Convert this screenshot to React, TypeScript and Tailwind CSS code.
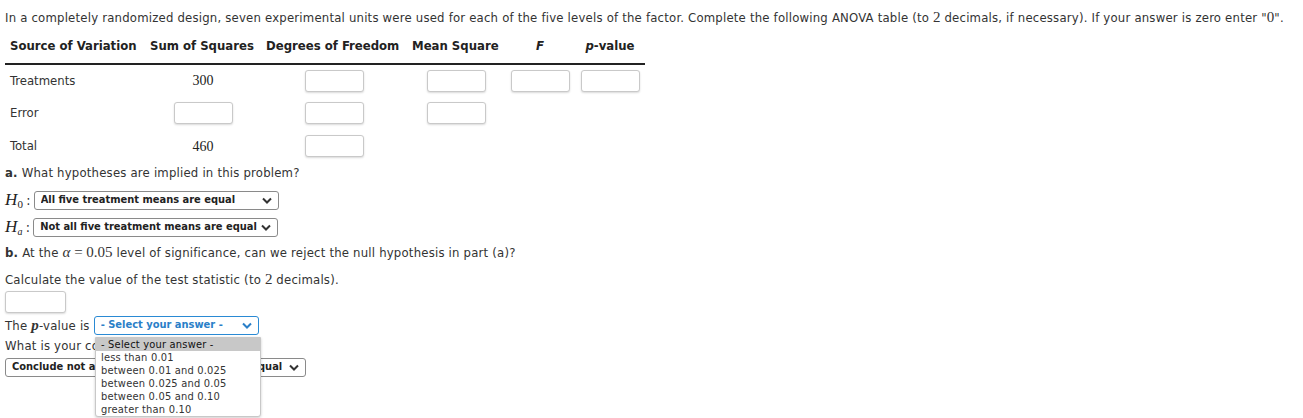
import React from "react";

const font = "font-['DejaVu_Sans_Condensed','DejaVu_Sans',sans-serif]";
const serif = "font-['Liberation_Serif','DejaVu_Serif',serif]";

function Box({ className = "" }: { className?: string }) {
  return (
    <span
      className={`inline-block w-[59px] h-[22px] rounded-[3px] border border-[#c9c9c9] bg-white shadow-[0_1px_2px_rgba(0,0,0,0.15)] align-middle ${className}`}
    />
  );
}

function Chevron({ color = "#333" }: { color?: string }) {
  return (
    <svg width="10" height="7" viewBox="0 0 10 7" className="shrink-0">
      <path d="M1 1.5 L5 5.5 L9 1.5" fill="none" stroke={color} strokeWidth="2" />
    </svg>
  );
}

function Select({ text, width, blue }: { text: string; width: string; blue?: boolean }) {
  return (
    <span
      className={`inline-flex items-center justify-between gap-[4px] h-[19px] rounded-[3px] border bg-white pl-[6px] pr-[6px] text-[11px] font-bold align-middle tracking-normal ${width} ${
        blue ? "border-[#2a8ad4] text-[#2a7fc8]" : "border-[#8a8a8a] text-[#222]"
      }`}
    >
      <span className="whitespace-nowrap overflow-hidden">{text}</span>
      <Chevron color={blue ? "#2a7fc8" : "#333"} />
    </span>
  );
}

function M({ children }: { children: React.ReactNode }) {
  return <span className={`${serif} text-[15px] tracking-normal`}>{children}</span>;
}

export default function App() {
  const th = "font-bold text-[13px] text-[#222] px-[5px] pb-[7px] pt-0 whitespace-nowrap";
  const td = "px-[5px] h-[33px] align-middle";
  return (
    <div className={`${font} text-[13px] tracking-[0.2px] text-[#333] bg-white w-[1303px] h-[418px] relative overflow-hidden`}>
      <div className="pl-[5px] pt-[8px] leading-[18px]">
        In a completely randomized design, seven experimental units were used for each of the five levels of the factor.
        Complete the following ANOVA table (to <M>2</M> decimals, if necessary). If your answer is zero enter "<M>0</M>".
      </div>

      <table className="ml-[5px] mt-[9px] border-collapse tracking-normal">
        <thead>
          <tr className="border-b-2 border-[#222]">
            <th className={`${th} text-left w-[140px]`}>Source of Variation</th>
            <th className={`${th} text-left w-[116px]`}>Sum of Squares</th>
            <th className={`${th} text-left w-[146px]`}>Degrees of Freedom</th>
            <th className={`${th} text-left w-[98px]`}>Mean Square</th>
            <th className={`${th} text-center w-[70px] italic`}>F</th>
            <th className={`${th} text-center w-[70px]`}>
              <span className="italic">p</span>-value
            </th>
          </tr>
        </thead>
        <tbody>
          <tr>
            <td className={td}>Treatments</td>
            <td className={`${td} text-center`}>
              <span className={`${serif} text-[14px] text-[#222]`}>300</span>
            </td>
            <td className={`${td} text-center`}><Box /></td>
            <td className={`${td} text-center`}><Box /></td>
            <td className={`${td} text-center`}><Box /></td>
            <td className={`${td} text-center`}><Box /></td>
          </tr>
          <tr>
            <td className={td}>Error</td>
            <td className={`${td} text-center`}><Box /></td>
            <td className={`${td} text-center`}><Box /></td>
            <td className={`${td} text-center`}><Box /></td>
            <td className={td} />
            <td className={td} />
          </tr>
          <tr>
            <td className={td}>Total</td>
            <td className={`${td} text-center`}>
              <span className={`${serif} text-[14px] text-[#222]`}>460</span>
            </td>
            <td className={`${td} text-center`}><Box /></td>
            <td className={td} />
            <td className={td} />
            <td className={td} />
          </tr>
        </tbody>
      </table>

      <div className="pl-[5px] leading-[18px] mt-[1px]">
        <b>a.</b> What hypotheses are implied in this problem?
      </div>
      <div className="pl-[5px] mt-[9px] flex items-center gap-[3px] h-[19px]">
        <span className={`${serif} italic text-[17px] text-[#222]`}>
          H<sub className="not-italic text-[11px]">0</sub>
        </span>
        <span className="text-[14px]">:</span>
        <Select text="All five treatment means are equal" width="w-[245px]" />
      </div>
      <div className="pl-[5px] mt-[8px] flex items-center gap-[3px] h-[19px]">
        <span className={`${serif} italic text-[17px] text-[#222]`}>
          H<sub className="italic text-[10px]">a</sub>
        </span>
        <span className="text-[14px]">:</span>
        <Select text="Not all five treatment means are equal" width="w-[245px]" />
      </div>
      <div className="pl-[5px] mt-[6px] leading-[18px]">
        <b>b.</b> At the <M><i>α</i> = 0.05</M> level of significance, can we reject the null hypothesis in part (a)?
      </div>
      <div className="pl-[5px] mt-[8px] leading-[18px]">
        Calculate the value of the test statistic (to <M>2</M> decimals).
      </div>
      <div className="pl-[5px] mt-[2px] leading-none">
        <Box className="w-[61px]" />
      </div>
      <div className="pl-[5px] mt-[3px] flex items-center gap-[4px] h-[20px]">
        <span>
          The <span className={`${serif} italic text-[15px] font-bold`}>p</span>-value is
        </span>
        <Select text="- Select your answer -" width="w-[165px]" blue />
      </div>
      <div className="pl-[5px] mt-[1px] leading-[18px]">What is your conclusion?</div>
      <div className="pl-[5px] mt-[2px]">
        <Select text="Conclude not all five treatment means are equal" width="w-[301px]" />
      </div>

      <div className="absolute left-[95px] top-[337px] w-[166px] border border-[#c8c8c8] bg-white text-[11px] tracking-[0.2px] text-[#333] leading-[13px] shadow-[0_1px_3px_rgba(0,0,0,0.2)] rounded-b-[3px]">
        <div className="bg-[#c8c8c8] px-[5px] text-[#111]">- Select your answer -</div>
        <div className="px-[5px]">less than 0.01</div>
        <div className="px-[5px]">between 0.01 and 0.025</div>
        <div className="px-[5px]">between 0.025 and 0.05</div>
        <div className="px-[5px]">between 0.05 and 0.10</div>
        <div className="px-[5px]">greater than 0.10</div>
      </div>
    </div>
  );
}
